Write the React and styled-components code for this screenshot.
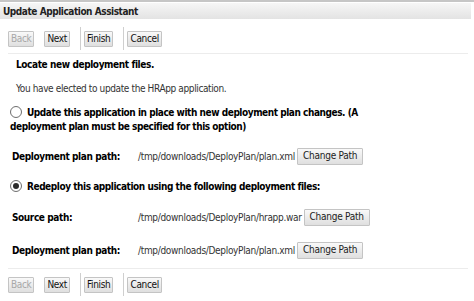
import React from "react";
import styled, { createGlobalStyle } from "styled-components";

const Global = createGlobalStyle`
  html, body { margin: 0; padding: 0; background: #fff; }
  body { font-family: "DejaVu Sans Condensed", "DejaVu Sans", sans-serif; font-size: 10px; color: #000; }
`;

const Page = styled.div`
  width: 474px;
  height: 301px;
  overflow: hidden;
  background: #fff;
`;

const TopRule = styled.div`
  height: 2px;
  background: #c6c6c6;
`;

const Header = styled.div`
  margin: 1px 3px 0 0;
  height: 16px;
  display: flex;
  align-items: center;
  padding-left: 3px;
  background: linear-gradient(#f6f6f6, #e3e3e3);
`;

const Title = styled.span`
  font-weight: bold;
  font-size: 10px;
  letter-spacing: -0.45px;
  color: #222;
`;

const Toolbar = styled.div`
  display: flex;
  align-items: center;
  height: 23px;
  padding-left: 8px;
  margin-top: ${(p) => p.$top}px;
`;

const Button = styled.button`
  font-family: inherit;
  font-size: 10px;
  letter-spacing: -0.35px;
  height: 16px;
  line-height: 14px;
  padding: 0 2px;
  margin: 0 ${(p) => p.$gap ?? 0}px 0 0;
  border: 1px solid #c4c4c4;
  border-radius: 1px;
  background: linear-gradient(#f9f9f9, #dfdfdf);
  color: ${(p) => (p.disabled ? "#a8a8a8" : "#111")};
  cursor: default;
`;

const Sep = styled.span`
  width: 1px;
  align-self: stretch;
  background: #cfcfcf;
  margin: 0 3px 0 10px;
`;

const Divider = styled.div`
  margin: ${(p) => p.$top}px 6px 0 8px;
  height: 1px;
  background: #ececec;
`;

const Heading = styled.div`
  margin: 4px 0 0 16px;
  line-height: 13px;
  font-weight: bold;
  letter-spacing: -0.4px;
`;

const Note = styled.div`
  margin: 11px 0 0 16px;
  line-height: 13px;
  letter-spacing: -0.38px;
  color: #333;
`;

const Option = styled.div`
  margin: ${(p) => p.$top}px 0 0 10px;
  width: ${(p) => p.$width || 460}px;
  line-height: 14px;
  font-weight: bold;
  letter-spacing: -0.45px;
`;

const Radio = styled.span`
  display: inline-block;
  box-sizing: border-box;
  width: 12px;
  height: 12px;
  border-radius: 50%;
  border: 1px solid #6f6f6f;
  background: radial-gradient(circle, #fff 60%, #eaeaea);
  vertical-align: -2px;
  margin-right: 5px;
  position: relative;
  &::after {
    content: "";
    display: ${(p) => (p.$checked ? "block" : "none")};
    position: absolute;
    left: 2px;
    top: 2px;
    width: 6px;
    height: 6px;
    border-radius: 50%;
    background: #2b2b2b;
  }
`;

const Field = styled.div`
  display: grid;
  grid-template-columns: 126px auto;
  align-items: center;
  height: 18px;
  margin: ${(p) => p.$top}px 0 0 12px;
`;

const Label = styled.span`
  font-weight: bold;
  letter-spacing: -0.4px;
  white-space: nowrap;
`;

const Value = styled.span`
  display: flex;
  align-items: center;
  color: #333;
  letter-spacing: -0.32px;
  gap: 2px;
  white-space: nowrap;
`;

const PathButton = styled(Button)`
  height: 17px;
  padding: 0 5px;
  letter-spacing: -0.25px;
  color: #222;
`;

function ButtonBar({ top }) {
  return (
    <Toolbar $top={top}>
      <Button disabled $gap={10}>Back</Button>
      <Button>Next</Button>
      <Sep />
      <Button>Finish</Button>
      <Sep />
      <Button>Cancel</Button>
    </Toolbar>
  );
}

function PathField({ top, label, value }) {
  return (
    <Field $top={top}>
      <Label>{label}</Label>
      <Value>
        {value}
        <PathButton>Change Path</PathButton>
      </Value>
    </Field>
  );
}

export default function App() {
  return (
    <Page>
      <Global />
      <TopRule />
      <Header>
        <Title>Update Application Assistant</Title>
      </Header>
      <ButtonBar top={8} />
      <Divider $top={3} />
      <Heading>Locate new deployment files.</Heading>
      <Note>You have elected to update the HRApp application.</Note>
      <Option $top={11} $width={380}>
        <Radio />
        Update this application in place with new deployment plan changes. (A deployment plan must be specified for this option)
      </Option>
      <PathField top={13} label="Deployment plan path:" value="/tmp/downloads/DeployPlan/plan.xml" />
      <Option $top={15}>
        <Radio $checked />
        Redeploy this application using the following deployment files:
      </Option>
      <PathField top={14} label="Source path:" value="/tmp/downloads/DeployPlan/hrapp.war" />
      <PathField top={15} label="Deployment plan path:" value="/tmp/downloads/DeployPlan/plan.xml" />
      <Divider $top={9} />
      <ButtonBar top={4} />
    </Page>
  );
}
